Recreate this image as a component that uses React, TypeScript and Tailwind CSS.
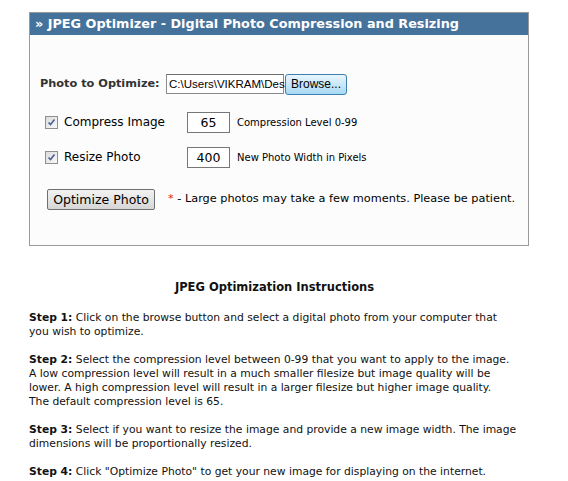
import React from "react";

const V = { fontFamily: '"DejaVu Sans", Verdana, sans-serif' };
const A = { fontFamily: '"Liberation Sans", Arial, sans-serif' };

function Check() {
  return (
    <span className="inline-flex w-[13px] h-[13px] border border-[#8e8f8f] bg-gradient-to-br from-[#dcdcdc] to-[#f8f8f8] items-center justify-center">
      <svg width="9" height="9" viewBox="0 0 9 9">
        <path d="M1.5 4.5 L3.5 6.5 L7.5 1.5" fill="none" stroke="#4a5f97" strokeWidth="1.6" />
      </svg>
    </span>
  );
}

export default function App() {
  return (
    <div className="w-[568px] h-[481px] bg-white text-black relative" style={V}>
      <div className="pt-[12px] pl-[29px]">
        <div className="w-[500px] h-[234px] border border-[#9a9a9a] bg-[#fcfcfc]">
          <div className="h-[22px] bg-[#44729b] text-white font-bold text-[12.8px] leading-[22px] pl-[5px] whitespace-nowrap">
            » JPEG Optimizer - Digital Photo Compression and Resizing
          </div>
          <div className="pl-[10px] pt-[39px]">
            <div className="flex items-center h-[20px]">
              <span className="font-bold text-[11.3px] text-[#333] w-[126px] whitespace-nowrap">Photo to Optimize:</span>
              <span className="h-[20px] w-[118px] border border-[#8a8a8a] border-t-[#6f6f6f] bg-white text-[11.5px] leading-[18px] pl-[2px] whitespace-nowrap" style={A}>
                C:\Users\VIKRAM\Des
              </span>
              <span className="ml-[1px] h-[21px] w-[62px] rounded-[3px] border border-[#3c7fb1] bg-gradient-to-b from-[#eaf6fd] to-[#a7d9f5] text-[12px] leading-[19px] text-center whitespace-nowrap" style={A}>
                Browse...
              </span>
            </div>
            <div className="flex items-center mt-[16px] h-[24px] pl-[5px]">
              <Check />
              <span className="ml-[6px] w-[123px] text-[12px]">Compress Image</span>
              <span className="h-[21px] w-[43px] border border-[#777] bg-white text-[12.5px] leading-[19px] text-center">65</span>
              <span className="ml-[7px] text-[10px]">Compression Level 0-99</span>
            </div>
            <div className="flex items-center mt-[11px] h-[24px] pl-[5px]">
              <Check />
              <span className="ml-[6px] w-[123px] text-[12px]">Resize Photo</span>
              <span className="h-[21px] w-[43px] border border-[#777] bg-white text-[12.5px] leading-[19px] text-center">400</span>
              <span className="ml-[7px] text-[10px]">New Photo Width in Pixels</span>
            </div>
            <div className="flex items-center mt-[20px] pl-[7px]">
              <span className="h-[21px] w-[108px] rounded-[2px] border border-[#707070] bg-gradient-to-b from-[#f2f2f2] to-[#d6d6d6] text-[12.5px] leading-[19px] text-center">
                Optimize Photo
              </span>
              <span className="ml-[13px] text-[11.3px] whitespace-nowrap">
                <span className="text-[#e02020]">*</span> - Large photos may take a few moments. Please be patient.
              </span>
            </div>
          </div>
        </div>
      </div>
      <div className="pl-[29px] w-[540px] text-[10.75px] leading-[14px] text-[#111]">
        <div className="mt-[34px] text-center font-bold text-[11.5px] w-[491px]">JPEG Optimization Instructions</div>
        <p className="mt-[17px]">
          <b>Step 1:</b> Click on the browse button and select a digital photo from your computer that<br />
          you wish to optimize.
        </p>
        <p className="mt-[14px]">
          <b>Step 2:</b> Select the compression level between 0-99 that you want to apply to the image.<br />
          A low compression level will result in a much smaller filesize but image quality will be<br />
          lower. A high compression level will result in a larger filesize but higher image quality.<br />
          The default compression level is 65.
        </p>
        <p className="mt-[14px]">
          <b>Step 3:</b> Select if you want to resize the image and provide a new image width. The image<br />
          dimensions will be proportionally resized.
        </p>
        <p className="mt-[14px]">
          <b>Step 4:</b> Click "Optimize Photo" to get your new image for displaying on the internet.
        </p>
      </div>
    </div>
  );
}
